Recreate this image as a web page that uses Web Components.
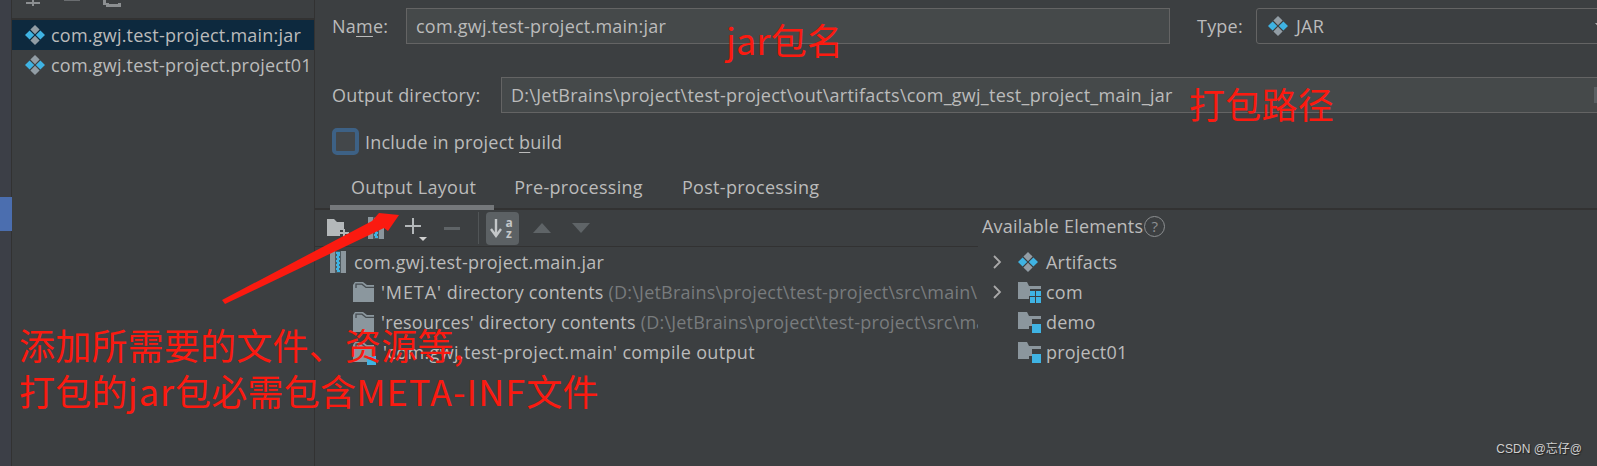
<!DOCTYPE html>
<html>
<head>
<meta charset="utf-8">
<style>
  html, body { margin: 0; width: 1597px; height: 466px; overflow: hidden; background: #3c3f41; }
</style>
</head>
<body>
<artifact-page></artifact-page>
<script>
const BLUE = '#3fb3e3';
const GRAY = '#929da5';
const DIAMOND = `<svg width="20" height="20" viewBox="0 0 20 20"><path fill="${GRAY}" d="M10 0l4.6 4.6L10 9.2 5.4 4.6zM10 10.8l4.6 4.6L10 20l-4.6-4.6z"/><path fill="${BLUE}" d="M4.6 5.4L9.2 10l-4.6 4.6L0 10zM15.4 5.4L20 10l-4.6 4.6L10.8 10z"/></svg>`;
const FOLDER = `<path fill="#8b979e" d="M0 3l2-3h8l4 3h7v17H0z"/><path fill="none" stroke="#454b4f" stroke-width="1.3" d="M3 6V2.2h6l4 3.2h8"/>`;
const ICONS = {
  diamond: DIAMOND,
  jar: `<svg width="16" height="22" viewBox="0 0 16 22"><path fill="#8b969d" d="M0 0h5v22H0zM11 0h5v22h-5z"/><path fill="#4e5a60" d="M5 0h6v22H5z"/><path fill="${BLUE}" d="M6 1h4v2H6zM7 3h3v2H7zM6 5h3v2H6zM7 7h3v2H7zM6 9h3v2H6zM7 11h3v2H7zM6 13h3v2H6zM7 15h3v2H7zM6 17h3v2H6zM7 19h3v2H7z"/></svg>`,
  folder: `<svg width="21" height="20" viewBox="0 0 21 20">${FOLDER}</svg>`,
  module: `<svg width="23" height="22" viewBox="0 0 23 22"><path fill="#8b969d" d="M0 1h9l2 4h12v3h-9v7h-3v3H0z"/><path fill="${BLUE}" d="M14 13h9v9h-9z"/></svg>`,
  package: `<svg width="23" height="22" viewBox="0 0 23 22"><path fill="#8b969d" d="M0 1h9l2 4h12v3h-11v7h-1v3H0z"/><path fill="${BLUE}" d="M12 10h5v5h-5zM18 10h5v5h-5zM12 16h5v6h-5zM18 16h5v6h-5z"/></svg>`,
  output: `<svg width="23" height="23" viewBox="0 0 23 23">${FOLDER}<path fill="${BLUE}" d="M14 14h9v9h-9z"/></svg>`,
  chevron: `<svg width="10" height="14" viewBox="0 0 10 14"><path fill="none" stroke="#a9a9a9" stroke-width="1.8" d="M2 1l6 6-6 6"/></svg>`,
  folderAdd: `<svg width="22" height="20" viewBox="0 0 22 20"><path fill="#b4b8ba" d="M0 1h7l3 3h7v8h-4v6H0z"/><path fill="#b4b8ba" d="M16 11h2v3h4v2h-4v4h-2v-4h-3v-2h3z"/></svg>`,
  plus: `<svg width="23" height="26" viewBox="0 0 23 26"><path fill="#b4b8ba" d="M7 0h2v7h7v2H9v7H7V9H0V7h7z"/><path fill="#d0d0d0" d="M14 19h8l-4 4z"/></svg>`,
  minus: `<svg width="16" height="3" viewBox="0 0 16 3"><path fill="#5f6467" d="M0 0h16v3H0z"/></svg>`,
  up: `<svg width="18" height="10" viewBox="0 0 18 10"><path fill="#5f6467" d="M9 0l9 10H0z"/></svg>`,
  down: `<svg width="18" height="10" viewBox="0 0 18 10"><path fill="#5f6467" d="M0 0h18L9 10z"/></svg>`,
  sort: `<svg width="14" height="26" viewBox="0 0 14 26"><path fill="none" stroke="#c4c7c9" stroke-width="2.4" d="M7 4v17M2 14l5 7 5-7"/></svg>`,
  sideAdd: `<svg width="16" height="6" viewBox="0 0 16 6"><path fill="#8c8f91" d="M7 0h2v2h6v2H9v2H7V4H1V2h6z"/></svg>`,
  sideDel: `<svg width="16" height="6" viewBox="0 0 16 6"><path fill="#6a6d70" d="M0 0h16v1H0z"/></svg>`,
  sideCopy: `<svg width="18" height="7" viewBox="0 0 18 7"><path fill="#8c8f91" d="M0 0h3v3h15v4H3V5H0zM6 3v1h9V3z"/></svg>`
};

customElements.define('ij-icon', class IjIcon extends HTMLElement {
  connectedCallback() {
    if (this.shadowRoot) return;
    this.attachShadow({ mode: 'open' });
    this.shadowRoot.innerHTML = `<style>:host { display: inline-flex; flex: none; } svg { display: block; overflow: visible; }</style>${ICONS[this.getAttribute('name')] || ''}`;
  }
});

// one row of the output layout / available elements trees
customElements.define('tree-row', class TreeRow extends HTMLElement {
  constructor() {
    super();
    this.attachShadow({ mode: 'open' });
    this.shadowRoot.innerHTML = `
      <style>
        :host { display: flex; align-items: center; height: 30px; white-space: nowrap; overflow: hidden; color: #bbb; }
        .icon { display: flex; align-items: center; justify-content: flex-start; flex: none; }
        .text { margin-left: 7px; }
        :host([small]) .text { margin-left: 5px; }
        ::slotted(i) { font-style: normal; color: #787b7d; }
        ::slotted(b) { font-weight: 400; letter-spacing: .9px; }
      </style>
      <span class="icon"><slot name="icon"></slot></span>
      <span class="text"><slot></slot></span>`;
  }
});

customElements.define('text-field', class TextField extends HTMLElement {
  constructor() {
    super();
    this.attachShadow({ mode: 'open' });
    this.shadowRoot.innerHTML = `
      <style>
        :host { display: flex; align-items: center; box-sizing: border-box; height: 36px; padding: 0 9px; background: #45494a; border: 1px solid #646464; color: #bbb; white-space: nowrap; overflow: hidden; }
      </style><slot></slot>`;
  }
});

customElements.define('type-combo', class TypeCombo extends HTMLElement {
  constructor() {
    super();
    this.attachShadow({ mode: 'open' });
    this.shadowRoot.innerHTML = `
      <style>
        :host { display: flex; align-items: center; box-sizing: border-box; flex: none; width: 360px; height: 36px; padding: 0 0 0 11px; background: #3c3f41; border: 1px solid #646464; border-radius: 3px; color: #bbb; }
        .arrow { margin-left: auto; width: 0; height: 0; border: 6px solid transparent; border-top: 7px solid #aaa; border-bottom: 0; margin-right: 8px; margin-top: 1px; }
        .wrap { display: flex; align-items: center; gap: 8px; }
      </style>
      <span class="wrap"><slot></slot></span><span class="arrow"></span>`;
  }
});

customElements.define('tab-strip', class TabStrip extends HTMLElement {
  constructor() {
    super();
    this.attachShadow({ mode: 'open' });
    this.shadowRoot.innerHTML = `
      <style>
        :host { display: flex; height: 55px; box-sizing: border-box; padding-left: 15px; border-bottom: 2px solid #323232; color: #bbb; letter-spacing: .3px; }
        ::slotted(span) { display: flex; align-items: center; justify-content: center; box-sizing: border-box; height: 55px; padding: 14px 19px 0 20px; border-bottom: 5px solid transparent; }
        ::slotted(span.on) { border-bottom-color: #75787b; padding-left: 21px; padding-right: 18px; }
      </style><slot></slot>`;
  }
});

// red hand-written remarks drawn over the screenshot
customElements.define('red-note', class RedNote extends HTMLElement {
  constructor() {
    super();
    this.attachShadow({ mode: 'open' });
    this.shadowRoot.innerHTML = `
      <style>
        :host { position: absolute; display: block; color: #fb1a10; font: 36px/56px "Noto Sans CJK SC", sans-serif; white-space: nowrap; }
        ::slotted(span) { letter-spacing: 1.1px; }
      </style><slot></slot>`;
  }
});

customElements.define('artifact-page', class ArtifactPage extends HTMLElement {
  constructor() {
    super();
    this.attachShadow({ mode: 'open' });
    this.shadowRoot.innerHTML = `
      <style>
        :host { position: relative; display: grid; grid-template-columns: 12px 303px 1282px; width: 1597px; height: 466px; overflow: hidden; background: #3c3f41; font: 18px "Open Sans", sans-serif; letter-spacing: .22px; color: #bbb; }
        .strip { background: #3c3f47; border-right: 1px solid #323232; width: 11px; padding-top: 197px; }
        .strip div { height: 34px; width: 12px; background: #4b6eaf; }
        .side { border-right: 1px solid #323232; overflow: hidden; min-width: 0; }
        .side-tools { display: flex; align-items: flex-start; gap: 23px; height: 18px; overflow: hidden; border-bottom: 2px solid #323232; padding-left: 13px; }
        .side-row { display: flex; align-items: center; gap: 6px; height: 30px; padding-left: 13px; white-space: nowrap; overflow: hidden; }
        .side-row.sel { background: #0d293e; }
        .main { min-width: 0; overflow: hidden; }
        .row { display: flex; align-items: center; height: 36px; padding-left: 17px; white-space: nowrap; }
        label { flex: none; }
        u { text-underline-offset: 3px; }
        .name { margin-top: 8px; }
        .name label { width: 74px; }
        .name text-field { width: 764px; flex: none; }
        .name .type { margin-left: 27px; width: 59px; }
        .out { margin-top: 33px; }
        .out label { width: 169px; }
        .out text-field { width: 1100px; flex: none; letter-spacing: .26px; }
        .browse { width: 6px; height: 16px; background: #5b6063; margin-left: auto; margin-right: -9px; }
        .check { margin-top: 15px; height: 27px; gap: 6px; }
        .box { box-sizing: border-box; width: 27px; height: 27px; background: #43474a; border: 4px solid #3d6185; border-radius: 5px; }
        .split { display: grid; grid-template-columns: 663px 1fr; }
        .tools { display: flex; align-items: center; height: 36px; padding-left: 12px; border-bottom: 1px solid #323232; }
        .tools .sep { width: 1px; height: 32px; background: #515557; margin: 0 7px 0 18px; }
        .sortbtn { display: flex; align-items: center; gap: 1px; box-sizing: border-box; width: 33px; height: 33px; background: #5c6164; border-radius: 4px; padding-left: 3px; }
        .sortbtn span { font: 700 12px/11px "Open Sans", sans-serif; letter-spacing: 0; color: #c4c7c9; width: 10px; text-align: center; }
        .tree { padding: 0 0 0 15px; overflow: hidden; }
        .tree .sub { padding-left: 23px; }
        .tree .sp { letter-spacing: .35px; }
        .root-icon { margin-right: 1px; }
        .avail { display: flex; align-items: center; box-sizing: border-box; height: 36px; padding: 0 0 4px 4px; }
        .help { box-sizing: border-box; width: 21px; height: 21px; border: 1.5px solid #8c8f91; border-radius: 50%; font: 15px/18px "Open Sans", sans-serif; color: #8c8f91; text-align: center; margin-left: 1px; }
        .etree { padding: 1px 0 0 14px; }
        .cv { width: 26px; display: inline-flex; }
        .art { margin-right: 3px; }
        .arrow { position: absolute; left: 0; top: 0; pointer-events: none; }
        .mark { position: absolute; right: 15px; top: 440px; font: 12px/18px "Liberation Sans", "Noto Sans CJK SC", sans-serif; letter-spacing: 0; color: #cfcfcf; text-shadow: 1px 1px 1px #222; }
      </style>
      <div class="strip"><div></div></div>
      <aside class="side">
        <div class="side-tools">
          <ij-icon name="sideAdd"></ij-icon><ij-icon name="sideDel"></ij-icon><ij-icon name="sideCopy"></ij-icon>
        </div>
        <div>
          <div class="side-row sel"><ij-icon name="diamond"></ij-icon><span>com.gwj.test-project.main:jar</span></div>
          <div class="side-row"><ij-icon name="diamond"></ij-icon><span>com.gwj.test-project.project01</span></div>
        </div>
      </aside>
      <section class="main">
        <div class="row name">
          <label>Na<u>m</u>e:</label>
          <text-field>com.gwj.test-project.main:jar</text-field>
          <label class="type">Type:</label>
          <type-combo><ij-icon name="diamond"></ij-icon><span>JAR</span></type-combo>
        </div>
        <div class="row out">
          <label>Output directory:</label>
          <text-field>D:\\JetBrains\\project\\test-project\\out\\artifacts\\com_gwj_test_project_main_jar<span class="browse"></span></text-field>
        </div>
        <div class="row check"><span class="box"></span><span>Include in project <u>b</u>uild</span></div>
        <tab-strip><span class="on">Output Layout</span><span>Pre-processing</span><span>Post-processing</span></tab-strip>
        <div class="split">
          <div>
            <div class="tools">
              <ij-icon name="folderAdd"></ij-icon>
              <ij-icon name="jar" style="margin-left:19px"></ij-icon>
              <ij-icon name="plus" style="margin-left:21px;margin-top:5px"></ij-icon>
              <ij-icon name="minus" style="margin-left:16px"></ij-icon>
              <span class="sep"></span>
              <span class="sortbtn"><ij-icon name="sort"></ij-icon><span>a<br>z</span></span>
              <ij-icon name="up" style="margin-left:14px"></ij-icon>
              <ij-icon name="down" style="margin-left:21px"></ij-icon>
            </div>
            <div class="tree">
              <tree-row><ij-icon slot="icon" name="jar" class="root-icon"></ij-icon>com.gwj.test-project.main.jar</tree-row>
              <tree-row class="sub"><ij-icon slot="icon" name="folder"></ij-icon><b>'META'</b> directory contents <i>(D:\\JetBrains\\project\\test-project\\src\\main\\META-INF)</i></tree-row>
              <tree-row class="sub"><ij-icon slot="icon" name="folder"></ij-icon>'resources' directory contents <i>(D:\\JetBrains\\project\\test-project\\src\\main\\resources)</i></tree-row>
              <tree-row class="sub sp"><ij-icon slot="icon" name="output" style="margin-top:3px"></ij-icon>'com.gwj.test-project.main' compile output</tree-row>
            </div>
          </div>
          <div>
            <div class="avail">Available Elements<span class="help">?</span></div>
            <div class="etree">
              <tree-row small><span slot="icon" class="cv"><ij-icon name="chevron"></ij-icon></span><ij-icon slot="icon" name="diamond" class="art"></ij-icon>Artifacts</tree-row>
              <tree-row small><span slot="icon" class="cv"><ij-icon name="chevron"></ij-icon></span><ij-icon slot="icon" name="package"></ij-icon>com</tree-row>
              <tree-row small><span slot="icon" class="cv"></span><ij-icon slot="icon" name="module"></ij-icon>demo</tree-row>
              <tree-row small><span slot="icon" class="cv"></span><ij-icon slot="icon" name="module"></ij-icon>project01</tree-row>
            </div>
          </div>
        </div>
      </section>
      <svg class="arrow" width="1597" height="466"><path fill="#fb1a10" d="M222 300L372 221l7-8 20 2-11 16-4-3-159 76z"/></svg>
      <red-note style="left:726px;top:11px">jar包名</red-note>
      <red-note style="left:1189px;top:75px">打包路径</red-note>
      <red-note style="left:19px;top:316px">添加所需要的文件、资源等,</red-note>
      <red-note style="left:19px;top:362px">打包的<span>jar</span>包必需包含<span>META-INF</span>文件</red-note>
      <div class="mark">CSDN @忘仔@</div>`;
  }
});
</script>
</body>
</html>
